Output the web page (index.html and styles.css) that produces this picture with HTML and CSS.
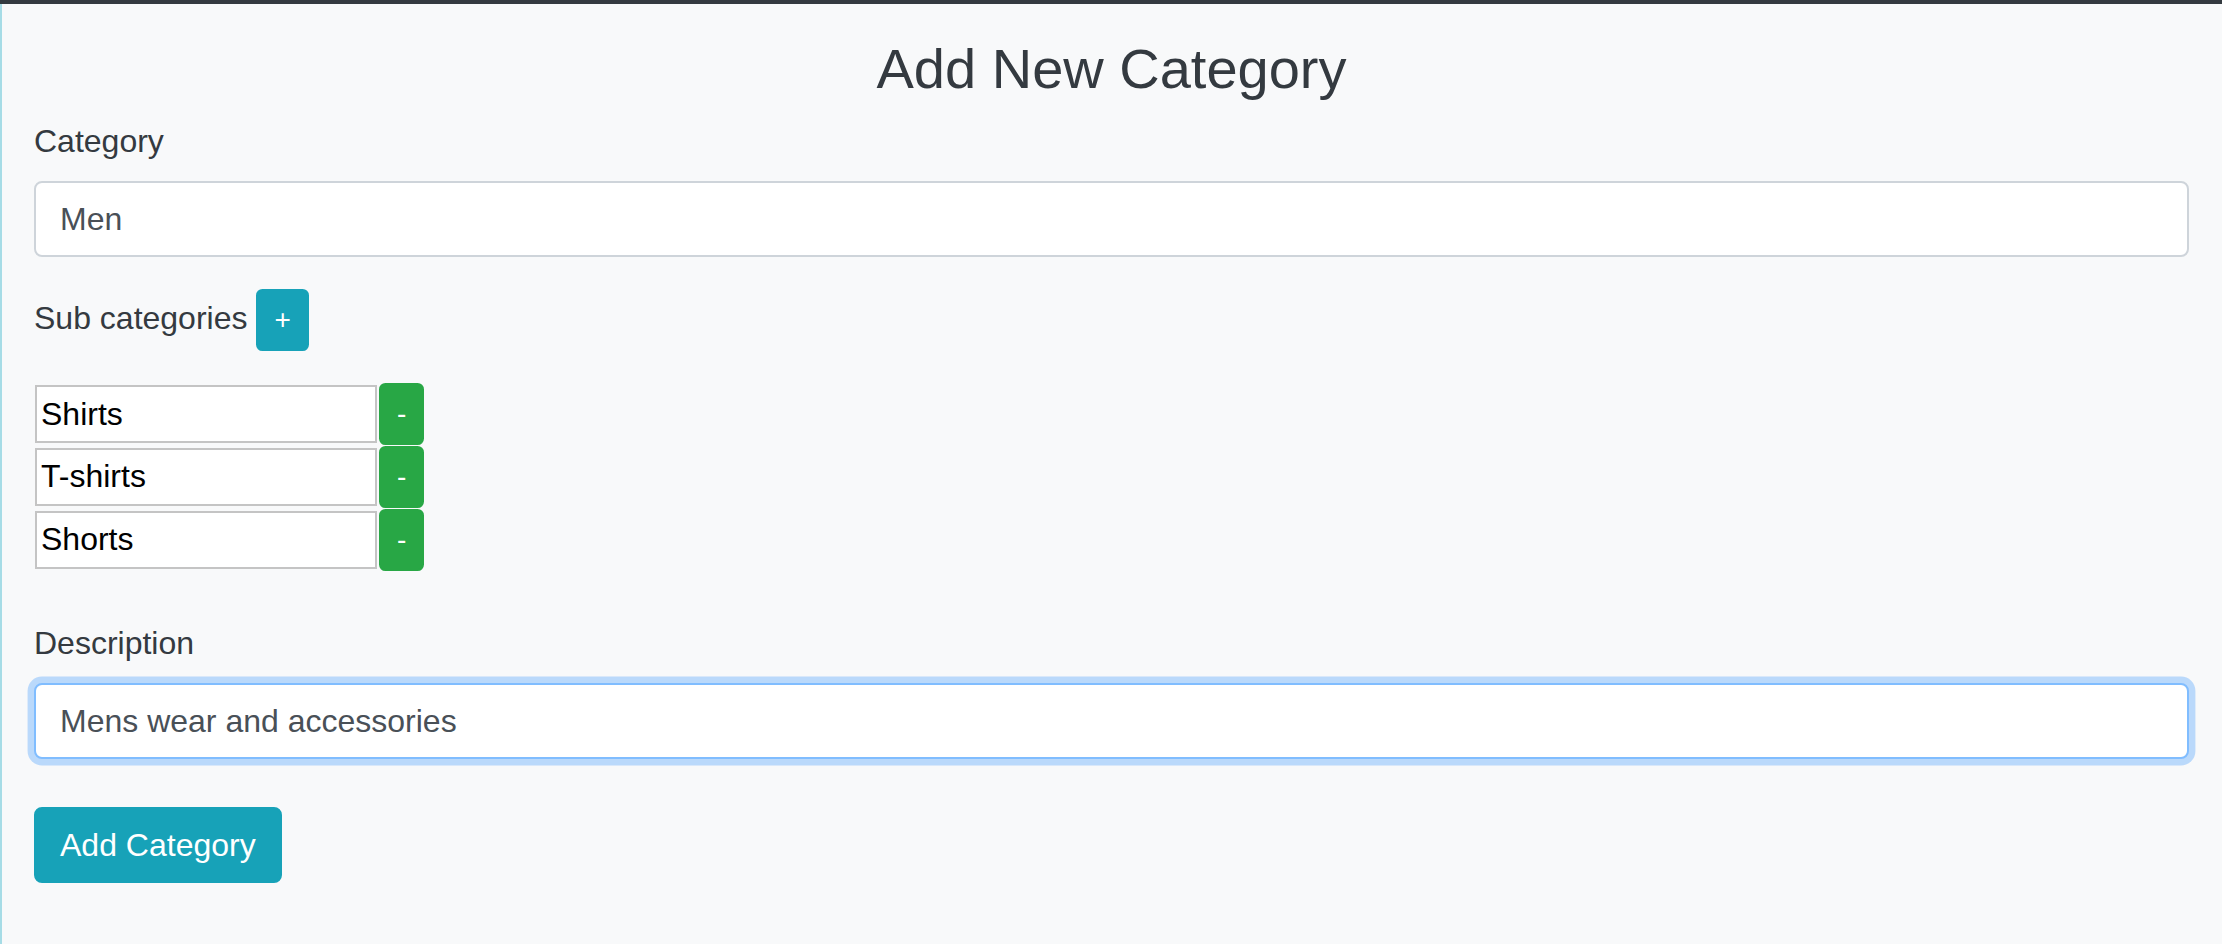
FILE: index.html
```html
<!DOCTYPE html>
<html lang="en">
<head>
<meta charset="utf-8">
<title>Add New Category</title>
<link rel="stylesheet" href="styles.css">
</head>
<body>
<div class="topbar"></div>
<main class="page">
  <h3 class="title">Add New Category</h3>
  <form class="category-form">
    <div class="form-group">
      <label class="form-label" for="category">Category</label>
      <input class="form-control" id="category" type="text" value="Men">
    </div>
    <div class="sub-header">
      <label class="form-label-inline">Sub categories</label>
      <button type="button" class="btn btn-sm btn-info">+</button>
    </div>
    <div class="sub-list">
      <div class="sub-row">
        <input class="sub-input" type="text" value="Shirts">
        <button type="button" class="btn btn-sm btn-success">-</button>
      </div>
      <div class="sub-row">
        <input class="sub-input" type="text" value="T-shirts">
        <button type="button" class="btn btn-sm btn-success">-</button>
      </div>
      <div class="sub-row">
        <input class="sub-input" type="text" value="Shorts">
        <button type="button" class="btn btn-sm btn-success">-</button>
      </div>
    </div>
    <div class="form-group form-group-last">
      <label class="form-label" for="description">Description</label>
      <input class="form-control is-focused" id="description" type="text" value="Mens wear and accessories">
    </div>
    <button type="submit" class="btn btn-lg-ish btn-info">Add Category</button>
  </form>
</main>
</body>
</html>
```
FILE: styles.css
```css
* {
  box-sizing: border-box;
}

html, body {
  margin: 0;
  padding: 0;
}

body {
  background: #f8f9fa;
  font-family: "Liberation Sans", Arial, Helvetica, sans-serif;
  color: #343a40;
  width: 2222px;
  height: 944px;
  overflow: hidden;
}

.topbar {
  height: 4px;
  background: #343a40;
}

.page {
  border-left: 2px solid #a6dce6;
  padding: 31px 33px 0 32px;
  height: 940px;
}

.title {
  margin: 0 0 15px;
  font-size: 56px;
  line-height: 67px;
  font-weight: 400;
  text-align: center;
  color: #343a40;
}

.form-group {
  margin-bottom: 32px;
}

.form-group-last {
  margin-bottom: 48px;
}

.form-label {
  display: inline-block;
  margin-bottom: 16px;
  font-size: 32px;
  line-height: 48px;
  color: #343a40;
}

.form-control {
  display: block;
  width: 100%;
  height: 76px;
  padding: 12px 24px;
  font-family: "Liberation Sans", Arial, Helvetica, sans-serif;
  font-size: 32px;
  line-height: 48px;
  color: #495057;
  background: #fff;
  border: 2px solid #ced4da;
  border-radius: 8px;
  outline: none;
}

.form-control.is-focused {
  border-color: #80bdff;
  box-shadow: 0 0 0 6.4px rgba(0, 123, 255, 0.25);
}

.sub-header {
  display: flex;
  align-items: baseline;
  gap: 9px;
  margin-bottom: 32px;
}

.form-label-inline {
  font-size: 32px;
  line-height: 48px;
  color: #343a40;
}

.sub-list {
  margin-bottom: 48px;
  margin-left: 1px;
}

.sub-row {
  display: flex;
  align-items: center;
  gap: 2px;
  height: 63px;
}

.sub-row:first-child {
  height: 62px;
}

.sub-input {
  width: 342px;
  height: 58px;
  padding: 0 4px;
  font-family: "Liberation Sans", Arial, Helvetica, sans-serif;
  font-size: 32px;
  color: #000;
  background: #fff;
  border: 2px solid #c4c4c4;
  border-radius: 0;
  outline: none;
}

.btn {
  display: inline-block;
  font-family: "Liberation Sans", Arial, Helvetica, sans-serif;
  color: #fff;
  border: 2px solid transparent;
  cursor: pointer;
  text-align: center;
  margin: 0;
}

.btn-sm {
  font-size: 28px;
  line-height: 42px;
  padding: 8px 16px;
  border-radius: 6.4px;
}

.btn-lg-ish {
  font-size: 32px;
  line-height: 48px;
  padding: 12px 24px;
  border-radius: 8px;
}

.btn-info {
  background: #17a2b8;
  border-color: #17a2b8;
}

.btn-success {
  background: #28a745;
  border-color: #28a745;
}
```
